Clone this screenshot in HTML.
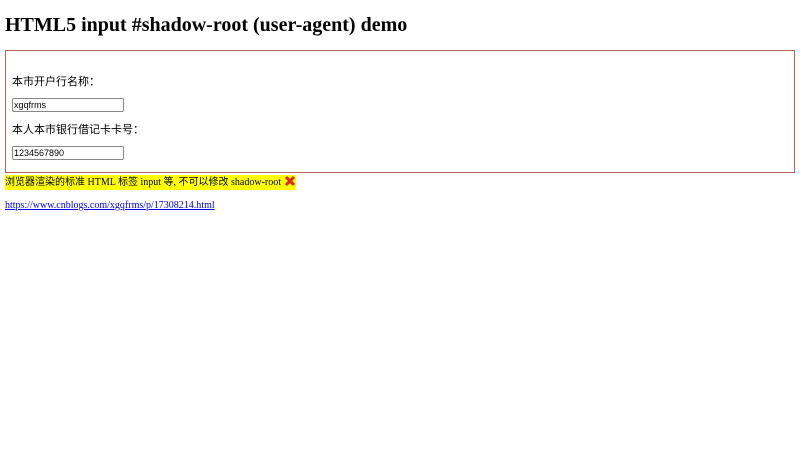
<!DOCTYPE html>
<html><head><meta charset="utf-8"><style>
body{margin:0;font-family:"Liberation Serif","Noto Serif CJK SC",serif;font-size:16px;color:#000;background:#fff;position:relative;width:800px;height:450px;overflow:hidden}
.a{position:absolute;white-space:nowrap}
h1{position:absolute;left:5px;top:12px;margin:0;font-size:20px;line-height:26px;font-weight:bold}
.box{position:absolute;left:5px;top:50px;width:788px;height:121px;border:1px solid #b5625c}
.lbl{font-family:"Liberation Sans","Noto Sans CJK SC",sans-serif;font-size:11px;line-height:16px}
.inp{position:absolute;left:12px;width:109px;height:12px;border:1px solid #888;border-radius:2px;font-family:"Liberation Sans",sans-serif;font-size:9px;line-height:12px;padding-left:1px;background:#fff}
.hl{background:#ffff00;font-size:10px;line-height:14px;font-family:"Liberation Serif","Noto Sans CJK SC",serif}
a{color:#00e;font-size:10px}
</style></head><body>
<h1>HTML5 input #shadow-root (user-agent) demo</h1>
<div class="box"></div>
<div class="a lbl" style="left:12px;top:74px">本市开户行名称：</div>
<div class="inp" style="top:98px">xgqfrms</div>
<div class="a lbl" style="left:12px;top:122px">本人本市银行借记卡卡号：</div>
<div class="inp" style="top:146px">1234567890</div>
<div class="a hl" style="left:5px;top:175px">浏览器渲染的标准 HTML 标签 input 等, 不可以修改 shadow-root <svg width="12" height="12" viewBox="0 0 12 12" style="vertical-align:-2px"><path d="M2 2L10 10M10 2L2 10" stroke="#e0241b" stroke-width="3"/></svg></div>
<div class="a" style="left:5px;top:200px;font-size:10px"><a href="#">https://www.cnblogs.com/xgqfrms/p/17308214.html</a></div>
</body></html>
